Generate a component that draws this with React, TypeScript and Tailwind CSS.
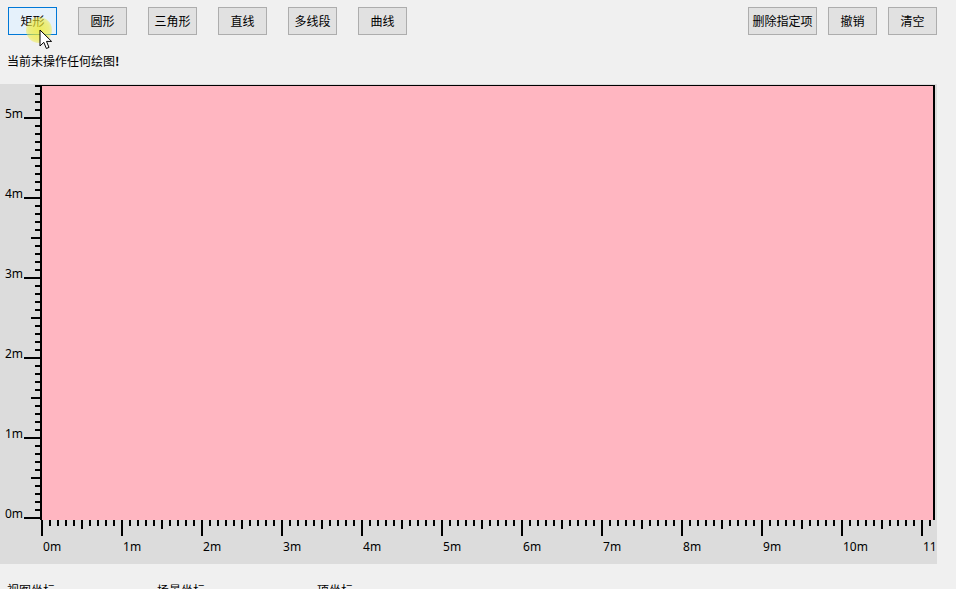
import React from "react";

const font = { fontFamily: '"Noto Sans CJK SC", "Noto Sans", sans-serif' };

function Btn({ label, w = "w-[49px]", active = false }: { label: string; w?: string; active?: boolean }) {
  return (
    <div
      className={`${w} h-[28px] flex items-center justify-center text-[12px] text-black border ${
        active ? "bg-[#e5f1fb] border-[#0078d7]" : "bg-[#e1e1e1] border-[#adadad]"
      }`}
    >
      {label}
    </div>
  );
}

function LeftRuler() {
  const ticks = Array.from({ length: 55 }, (_, i) => i);
  return (
    <svg width={42} height={436} className="block shrink-0 overflow-visible">
      {ticks.map((i) => {
        const y = 434 - 8 * i;
        const len = i % 10 === 0 ? 16 : i % 5 === 0 ? 9 : 5;
        return <rect key={i} x={40 - len} y={y - 1} width={len} height={2} fill="#000" />;
      })}
      <rect x={40} y={1} width={2} height={435} fill="#000" />
      {[0, 1, 2, 3, 4, 5].map((k) => (
        <text
          key={k}
          x={23}
          y={434 - 80 * k}
          textAnchor="end"
          fontSize={12}
          fontFamily='"Noto Sans", "Open Sans", sans-serif'
          fill="#000"
        >
          {k}m
        </text>
      ))}
    </svg>
  );
}

function BottomRuler() {
  const ticks = Array.from({ length: 112 }, (_, i) => i);
  return (
    <svg width={937} height={44} className="block">
      {ticks.map((i) => {
        const x = 42 + 8 * i;
        const len = i % 10 === 0 ? 16 : i % 5 === 0 ? 9 : 6;
        return <rect key={i} x={x - 1} y={0} width={2} height={len} fill="#000" />;
      })}
      {Array.from({ length: 12 }, (_, k) => k).map((k) => (
        <text
          key={k}
          x={43 + 80 * k}
          y={31}
          fontSize={12}
          fontFamily='"Noto Sans", "Open Sans", sans-serif'
          fill="#000"
        >
          {k}m
        </text>
      ))}
    </svg>
  );
}

export default function App() {
  return (
    <div className="relative w-[956px] h-[589px] bg-[#f0f0f0] overflow-hidden text-black" style={font}>
      <div className="flex pt-[7px] pl-[8px] pr-[19px]">
        <div className="flex gap-[21px]">
          <Btn label="矩形" active />
          <Btn label="圆形" />
          <Btn label="三角形" />
          <Btn label="直线" />
          <Btn label="多线段" />
          <Btn label="曲线" />
        </div>
        <div className="ml-auto flex gap-[11px]">
          <Btn label="删除指定项" w="w-[69px]" />
          <Btn label="撤销" />
          <Btn label="清空" />
        </div>
      </div>

      <div className="mt-[18px] pl-[7px] h-[16px] leading-[16px] text-[12px]">
        当前未操作任何绘图<span className="font-bold">!</span>
      </div>

      <div className="mt-[15px] w-[937px] h-[480px] bg-[#dcdcdc] flex flex-col">
        <div className="flex h-[436px]">
          <LeftRuler />
          <div className="mt-[1px] w-[893px] h-[435px] bg-[#ffb6c1] border-t border-r-2 border-black" />
          <div className="flex-1" />
        </div>
        <BottomRuler />
      </div>

      <div className="mt-[18px] flex pl-[7px] h-[16px] leading-[16px] text-[12px]">
        <div className="w-[150px]">视图坐标</div>
        <div className="w-[160px]">场景坐标</div>
        <div>项坐标</div>
      </div>

      <div className="absolute left-[26px] top-[17px] w-[26px] h-[26px] rounded-full bg-[radial-gradient(circle,rgba(240,235,50,0.8)_0%,rgba(240,235,50,0.6)_55%,rgba(240,235,50,0)_100%)] pointer-events-none" />
      <svg className="absolute left-[39px] top-[29px] pointer-events-none" width={15} height={22} viewBox="0 0 15 22">
        <path d="M1 1 L1 17 L4.8 13.3 L7.4 19.5 L10 18.4 L7.5 12.4 L12.6 12.4 Z" fill="#fff" stroke="#000" strokeWidth={1} strokeLinejoin="miter" />
      </svg>
    </div>
  );
}
